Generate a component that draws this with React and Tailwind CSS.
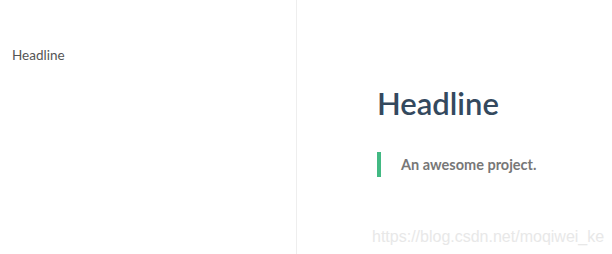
import React from 'react';

export default function App() {
    return (
        <div className="relative flex h-[254px] w-[612px] overflow-hidden bg-white font-['Lato',sans-serif]">
            {/* Editor pane */}
            <div className="w-[297px] shrink-0 border-r border-[#eeeeee] px-3 pt-[46px]">
                <p className="text-[13.5px] leading-[18px] text-[#555]">Headline</p>
            </div>

            {/* Preview pane */}
            <div className="flex-1 pl-[80px] pt-[84px]">
                <h1 className="text-[31px] font-semibold leading-[38px] text-[#34495e]">Headline</h1>
                <blockquote className="mt-[30px] border-l-4 border-[#42b983] pl-5">
                    <p className="text-[14.5px] font-bold leading-[25px] text-[#777]">An awesome project.</p>
                </blockquote>
            </div>

            {/* Watermark */}
            <span className="pointer-events-none absolute left-[372px] top-[225px] font-['Liberation_Sans',sans-serif] text-[16px] text-[#e8e8e8]">
                https://blog.csdn.net/moqiwei_ke
            </span>
        </div>
    );
}
